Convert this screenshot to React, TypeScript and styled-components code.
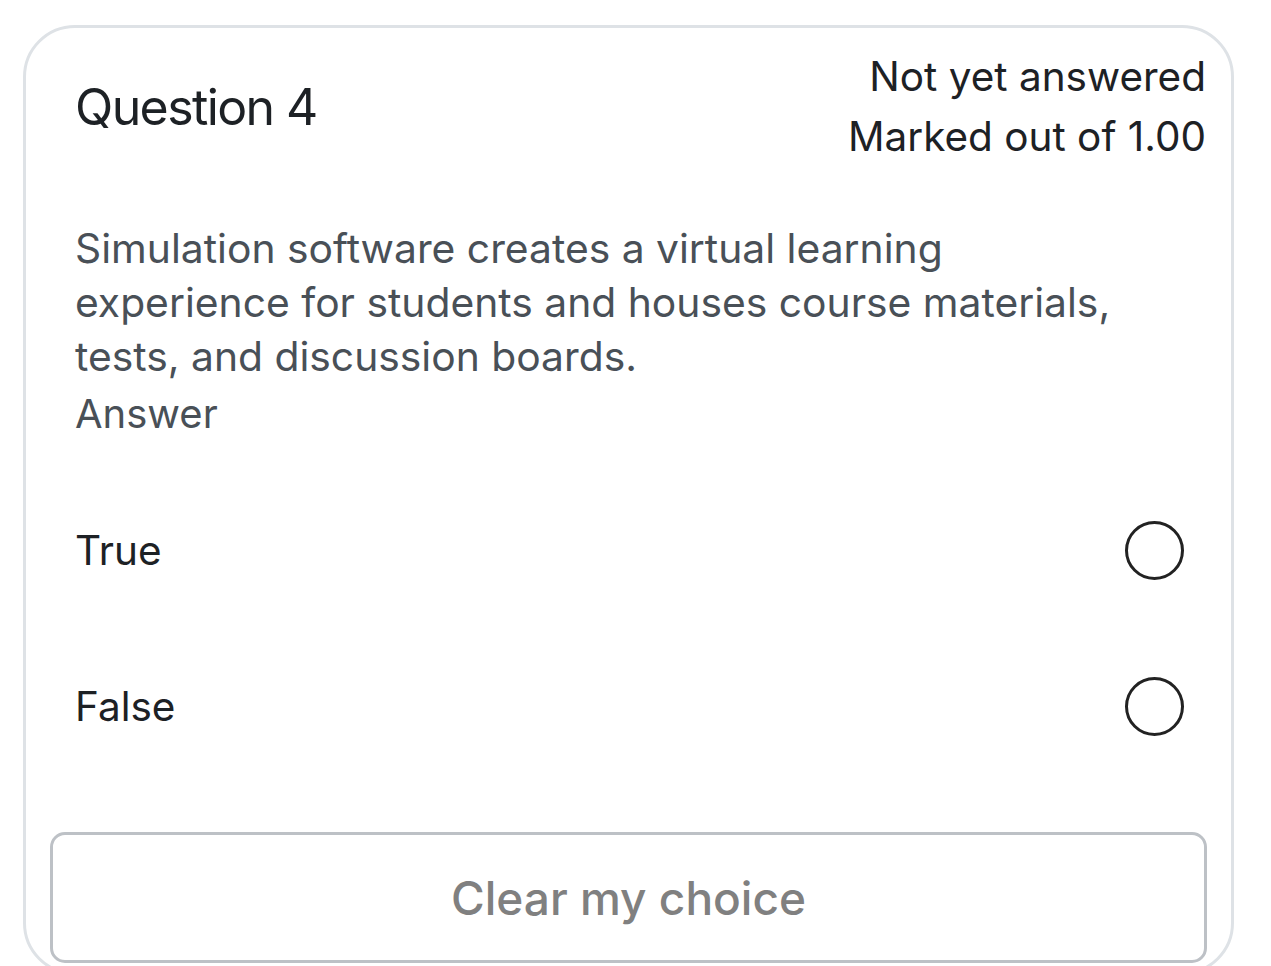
import { createGlobalStyle } from 'styled-components';
import styled from 'styled-components';

const GlobalStyle = createGlobalStyle`
  html, body {
    margin: 0;
    padding: 0;
    background: #ffffff;
    overflow: hidden;
  }

  body {
    font-family: Inter, "Noto Sans", Roboto, sans-serif;
  }
`;

const Page = styled.div`
  width: 1271px;
  height: 966px;
  overflow: hidden;
`;

const Card = styled.div`
  box-sizing: border-box;
  width: 1211px;
  height: 950px;
  margin: 25px 0 0 23px;
  padding: 0 24px;
  border: 3px solid #dee2e6;
  border-radius: 52px;
  background: #ffffff;
`;

const Header = styled.div`
  display: flex;
  align-items: center;
  justify-content: space-between;
  padding: 19px 1px 0 25px;
`;

const Title = styled.h3`
  margin: 0;
  font-size: 50px;
  font-weight: 400;
  color: #1d2125;
  letter-spacing: -1.6px;
`;

const Status = styled.div`
  text-align: right;
  font-size: 40.5px;
  line-height: 60px;
  color: #1d2125;
`;

const Content = styled.div`
  padding-left: 25px;
`;

const QuestionText = styled.p`
  margin: 54px 0 0;
  font-size: 40.8px;
  line-height: 54px;
  color: #495057;
  max-width: 1050px;
`;

const Prompt = styled.div`
  margin-top: 3px;
  font-size: 40px;
  line-height: 56px;
  color: #495057;
`;

const Options = styled.div`
  margin-top: 30px;
  display: flex;
  flex-direction: column;
`;

const Option = styled.label`
  display: flex;
  align-items: center;
  justify-content: space-between;
  height: 156px;
  font-size: 40.5px;
  color: #1d2125;
  cursor: pointer;
`;

const Radio = styled.span`
  box-sizing: border-box;
  width: 59px;
  height: 59px;
  margin-right: 23px;
  border: 3px solid #222222;
  border-radius: 50%;
`;

const ClearButton = styled.button`
  box-sizing: border-box;
  display: block;
  width: 100%;
  height: 131px;
  margin-top: 48px;
  border: 3px solid #bdc1c6;
  border-radius: 15px;
  background: #ffffff;
  font-family: inherit;
  font-size: 46px;
  font-weight: 500;
  color: #808080;
`;

const options = ['True', 'False'];

export default function App() {
  return (
    <Page>
      <GlobalStyle />
      <Card>
        <Header>
          <Title>Question 4</Title>
          <Status>
            <div>Not yet answered</div>
            <div>Marked out of 1.00</div>
          </Status>
        </Header>
        <Content>
          <QuestionText>
            Simulation software creates a virtual learning experience for students and houses course
            materials, tests, and discussion boards.
          </QuestionText>
          <Prompt>Answer</Prompt>
          <Options>
            {options.map((option) => (
              <Option key={option}>
                {option}
                <Radio />
              </Option>
            ))}
          </Options>
        </Content>
        <ClearButton>Clear my choice</ClearButton>
      </Card>
    </Page>
  );
}
